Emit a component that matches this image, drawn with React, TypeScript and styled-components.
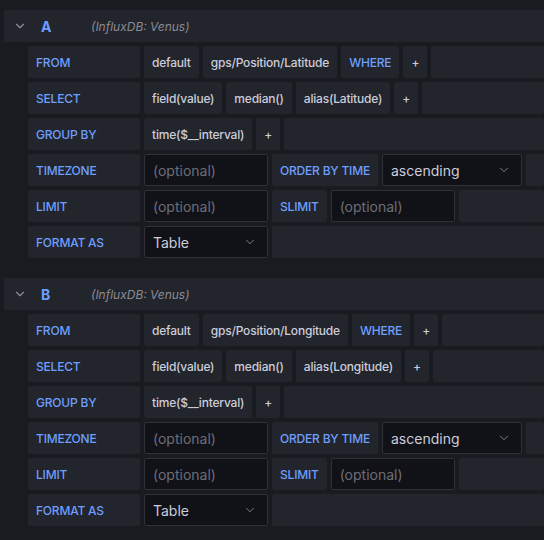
import React from "react";
import styled, { createGlobalStyle } from "styled-components";
import { ChevronDown } from "lucide-react";

const GlobalStyle = createGlobalStyle`
	html, body {
		margin: 0;
		padding: 0;
		background: #181b1f;
	}
	body {
		font-family: Inter, "Noto Sans", sans-serif;
		color: #ccccdc;
	}
`;

type QueryData = {
	refId: string;
	measurement: string;
	alias: string;
};

const queries: QueryData[] = [
	{ refId: "A", measurement: "gps/Position/Latitude", alias: "alias(Latitude)" },
	{ refId: "B", measurement: "gps/Position/Longitude", alias: "alias(Longitude)" },
];

function Query({ q }: { q: QueryData }) {
	return (
		<Section>
			<Header>
				<Chevron>
					<ChevronDown size={14} strokeWidth={2} />
				</Chevron>
				<RefId>{q.refId}</RefId>
				<Datasource>(InfluxDB: Venus)</Datasource>
			</Header>
			<Rows>
				<Row>
					<Label>FROM</Label>
					<Segment>default</Segment>
					<Segment>{q.measurement}</Segment>
					<Segment $keyword>WHERE</Segment>
					<Segment>+</Segment>
					<Filler />
				</Row>
				<Row>
					<Label>SELECT</Label>
					<Segment>field(value)</Segment>
					<Segment>median()</Segment>
					<Segment>{q.alias}</Segment>
					<Segment>+</Segment>
					<Filler />
				</Row>
				<Row>
					<Label>GROUP BY</Label>
					<Segment>time($__interval)</Segment>
					<Segment>+</Segment>
					<Filler />
				</Row>
				<Row>
					<Label>TIMEZONE</Label>
					<Input $width={124}>(optional)</Input>
					<InlineLabel>ORDER BY TIME</InlineLabel>
					<Select $width={140}>
						ascending
						<SelectArrow>
							<ChevronDown size={14} strokeWidth={1.5} />
						</SelectArrow>
					</Select>
					<Filler />
				</Row>
				<Row>
					<Label>LIMIT</Label>
					<Input $width={124}>(optional)</Input>
					<InlineLabel>SLIMIT</InlineLabel>
					<Input $width={124}>(optional)</Input>
					<Filler />
				</Row>
				<Row>
					<Label>FORMAT AS</Label>
					<Select $width={124}>
						Table
						<SelectArrow>
							<ChevronDown size={14} strokeWidth={1.5} />
						</SelectArrow>
					</Select>
					<Filler />
				</Row>
			</Rows>
		</Section>
	);
}

export default function App() {
	return (
		<>
			<GlobalStyle />
			<Page>
				{queries.map((q) => (
					<Query key={q.refId} q={q} />
				))}
			</Page>
		</>
	);
}

const Page = styled.div`
	padding: 10px 0 0 4px;
	display: grid;
	gap: 20px;
`;

const Section = styled.div`
	display: grid;
	gap: 4px;
`;

const Header = styled.div`
	height: 32px;
	background: #22252b;
	display: flex;
	align-items: center;
	padding-left: 9px;
`;

const Chevron = styled.span`
	display: flex;
	color: #8e8e93;
	width: 28px;
`;

const RefId = styled.span`
	width: 50px;
	color: #6e9fff;
	font-weight: 700;
	font-size: 14px;
`;

const Datasource = styled.span`
	font-style: italic;
	font-size: 12px;
	color: #8b8b96;
`;

const Rows = styled.div`
	display: grid;
	gap: 4px;
	padding-left: 24px;
`;

const Row = styled.div`
	display: flex;
	gap: 4px;
	height: 32px;
`;

const Box = styled.div`
	display: flex;
	align-items: center;
	background: #22252b;
	border-radius: 2px;
	font-size: 12px;
	font-weight: 500;
	letter-spacing: -0.2px;
	white-space: nowrap;
`;

const Label = styled(Box)`
	width: 112px;
	padding-left: 8px;
	box-sizing: border-box;
	color: #6e9fff;
`;

const InlineLabel = styled(Box)`
	padding: 0 8px;
	color: #6e9fff;
`;

const Segment = styled(Box)<{ $keyword?: boolean }>`
	padding: 0 8px;
	color: ${(p) => (p.$keyword ? "#6e9fff" : "#ccccdc")};
`;

const Filler = styled(Box)`
	flex: 1;
`;

const Input = styled.div<{ $width: number }>`
	width: ${(p) => p.$width}px;
	box-sizing: border-box;
	display: flex;
	align-items: center;
	padding: 0 8px;
	background: #111217;
	border: 1px solid #2f3137;
	border-radius: 2px;
	font-size: 14px;
	color: #6c6d78;
`;

const Select = styled(Input)`
	justify-content: space-between;
	color: #ccccdc;
	font-size: 14px;
`;

const SelectArrow = styled.span`
	display: flex;
	color: #8e8e93;
	margin-right: 2px;
`;
